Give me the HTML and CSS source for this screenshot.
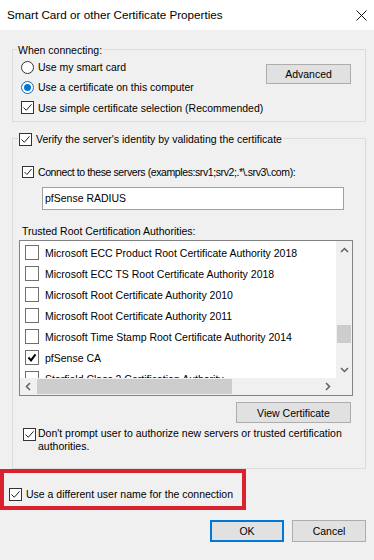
FILE: index.html
```html
<!DOCTYPE html>
<html lang="en">
<head>
    <meta charset="UTF-8">
    <meta name="viewport" content="width=device-width, initial-scale=1.0">
    <title>Smart Card or other Certificate Properties</title>
    <link rel="stylesheet" href="styles.css">
</head>
<body>
    <div class="titlebar">
        <span class="title">Smart Card or other Certificate Properties</span>
        <svg class="close" width="11" height="11" viewBox="0 0 11 11"><path d="M0.5 0.5l10 10M10.5 0.5l-10 10" stroke="#111" stroke-width="1" fill="none"/></svg>
    </div>

    <div class="group group-connect">
        <div class="legend">When connecting:</div>
        <div class="connect-body">
            <div class="options">
                <div class="row"><span class="radio"></span><span class="label">Use my smart card</span></div>
                <div class="row"><span class="radio checked"><span class="dot"></span></span><span class="label">Use a certificate on this computer</span></div>
                <div class="row row-last"><span class="cb"><svg width="11" height="11" viewBox="0 0 11 11"><path d="M1.5 5.5l2.8 2.8 5.2-6" fill="none" stroke="#222" stroke-width="1"/></svg></span><span class="label">Use simple certificate selection (Recommended)</span></div>
            </div>
            <button class="btn btn-advanced">Advanced</button>
        </div>
    </div>

    <div class="group group-verify">
        <div class="legend legend-check"><span class="cb"><svg width="11" height="11" viewBox="0 0 11 11"><path d="M1.5 5.5l2.8 2.8 5.2-6" fill="none" stroke="#222" stroke-width="1"/></svg></span><span class="label">Verify the server's identity by validating the certificate</span></div>

        <div class="row row-servers"><span class="cb cb-small"><svg width="10" height="10" viewBox="0 0 10 10"><path d="M1.5 5l2.5 2.5 4.5-5.5" fill="none" stroke="#222" stroke-width="1"/></svg></span><span class="label">Connect to these servers (examples:srv1;srv2;.*\.srv3\.com):</span></div>
        <div class="textbox">pfSense RADIUS</div>

        <div class="caption">Trusted Root Certification Authorities:</div>
        <div class="listbox">
            <div class="list-top">
                <div class="items">
                    <div class="item"><span class="item-cb"></span>Microsoft ECC Product Root Certificate Authority 2018</div>
                    <div class="item"><span class="item-cb"></span>Microsoft ECC TS Root Certificate Authority 2018</div>
                    <div class="item"><span class="item-cb"></span>Microsoft Root Certificate Authority 2010</div>
                    <div class="item"><span class="item-cb"></span>Microsoft Root Certificate Authority 2011</div>
                    <div class="item"><span class="item-cb"></span>Microsoft Time Stamp Root Certificate Authority 2014</div>
                    <div class="item"><span class="item-cb"><svg width="12" height="13" viewBox="0 0 12 13"><path d="M2.5 6.5l2.5 2.8 4.5-6" fill="none" stroke="#000" stroke-width="2"/></svg></span>pfSense CA</div>
                    <div class="item"><span class="item-cb"></span>Starfield Class 2 Certification Authority</div>
                </div>
                <div class="vscroll">
                    <span class="arrow"><svg width="9" height="6" viewBox="0 0 9 6"><path d="M1 5l3.5-3.5L8 5" fill="none" stroke="#606060" stroke-width="1.5"/></svg></span>
                    <div class="vtrack"><div class="vthumb"></div></div>
                    <span class="arrow"><svg width="9" height="6" viewBox="0 0 9 6"><path d="M1 1l3.5 3.5L8 1" fill="none" stroke="#606060" stroke-width="1.5"/></svg></span>
                </div>
            </div>
            <div class="hscroll">
                <span class="harrow"><svg width="6" height="9" viewBox="0 0 6 9"><path d="M5 1L1.5 4.5 5 8" fill="none" stroke="#606060" stroke-width="1.5"/></svg></span>
                <div class="htrack"><div class="hthumb"></div></div>
                <span class="harrow"><svg width="6" height="9" viewBox="0 0 6 9"><path d="M1 1l3.5 3.5L1 8" fill="none" stroke="#606060" stroke-width="1.5"/></svg></span>
                <span class="corner"></span>
            </div>
        </div>

        <div class="view-row"><button class="btn btn-view">View Certificate</button></div>

        <div class="row row-prompt"><span class="cb"><svg width="11" height="11" viewBox="0 0 11 11"><path d="M1.5 5.5l2.8 2.8 5.2-6" fill="none" stroke="#222" stroke-width="1"/></svg></span><span class="label">Don't prompt user to authorize new servers or trusted certification authorities.</span></div>
    </div>

    <div class="highlight">
        <div class="row"><span class="cb"><svg width="11" height="11" viewBox="0 0 11 11"><path d="M1.5 5.5l2.8 2.8 5.2-6" fill="none" stroke="#222" stroke-width="1"/></svg></span><span class="label">Use a different user name for the connection</span></div>
    </div>

    <div class="footer">
        <button class="btn btn-default">OK</button>
        <button class="btn">Cancel</button>
    </div>
</body>
</html>
```

FILE: styles.css
```css
body {
    margin: 0;
    width: 374px;
    height: 560px;
    overflow: hidden;
    background: #f0f0f0;
    font-family: "Liberation Sans", Arial, sans-serif;
    font-size: 10.5px;
    line-height: 14px;
    color: #000;
}
.titlebar {
    height: 30px;
    background: #fff;
    display: flex;
    align-items: center;
    justify-content: space-between;
    padding: 0 7px;
    font-size: 11.7px;
}
.close {
    margin-top: 1px;
}
.group {
    margin-left: 12px;
    width: 354px;
    box-sizing: border-box;
    border: 1px solid #dcdcdc;
}
.legend {
    display: flex;
    align-items: center;
    width: max-content;
    height: 14px;
    margin-top: -7px;
    padding: 0 1px;
    background: #f0f0f0;
}
.group-connect {
    margin-top: 19px;
    padding: 0 0 3px 8px;
}
.group-connect .legend {
    margin-left: -4px;
}
.connect-body {
    display: flex;
    justify-content: space-between;
    align-items: flex-start;
    padding-right: 14px;
}
.row {
    display: flex;
    align-items: center;
    height: 20px;
}
.row-last {
    height: 21px;
}
.label {
    margin-left: 4px;
    white-space: nowrap;
}
.radio {
    width: 13px;
    height: 13px;
    box-sizing: border-box;
    border: 1px solid #333;
    border-radius: 50%;
    background: #fff;
    display: flex;
    align-items: center;
    justify-content: center;
}
.radio.checked {
    border-color: #1c64a8;
}
.dot {
    width: 7px;
    height: 7px;
    border-radius: 50%;
    background: #0078d7;
}
.cb {
    width: 13px;
    height: 13px;
    box-sizing: border-box;
    border: 1px solid #333;
    background: #fff;
    display: flex;
    flex: none;
}
.cb-small {
    width: 12px;
    height: 12px;
}
.btn {
    font-family: inherit;
    font-size: 10.5px;
    color: #000;
    background: #e1e1e1;
    border: 1px solid #adadad;
    padding: 0;
    margin: 0;
}
.btn-advanced {
    margin-top: 7px;
    width: 85px;
    height: 20px;
}
.group-verify {
    margin-top: 16px;
    padding-bottom: 15px;
}
.legend-check {
    margin-left: 5px;
}
.row-servers {
    margin-top: 16px;
    margin-left: 9px;
}
.row-servers .label {
    letter-spacing: -0.4px;
}
.textbox {
    margin: 5px 0 0 29px;
    width: 302px;
    height: 23px;
    box-sizing: border-box;
    border: 1px solid #a0a0a0;
    background: #fff;
    padding: 0 2px;
    line-height: 21px;
}
.caption {
    margin: 14px 0 0 9px;
}
.listbox {
    margin: 2px 0 0 6px;
    width: 334px;
    height: 156px;
    box-sizing: border-box;
    border: 1px solid #828282;
    background: #fff;
    display: flex;
    flex-direction: column;
}
.list-top {
    display: flex;
    height: 137px;
}
.items {
    flex: 1;
    overflow: hidden;
    padding-top: 1px;
}
.item {
    display: flex;
    align-items: center;
    height: 21px;
    padding-left: 5px;
    white-space: nowrap;
}
.item-cb {
    width: 14px;
    height: 15px;
    box-sizing: border-box;
    border: 1px solid #6e6e6e;
    background: #fff;
    margin-right: 6px;
    flex: none;
    display: flex;
    align-items: center;
    justify-content: center;
}
.vscroll {
    width: 16px;
    background: #f0f0f0;
    display: flex;
    flex-direction: column;
}
.arrow {
    height: 17px;
    display: flex;
    align-items: center;
    justify-content: center;
}
.vtrack {
    flex: 1;
}
.vthumb {
    margin: 67px 1px 0;
    height: 18px;
    background: #cdcdcd;
}
.hscroll {
    display: flex;
    height: 17px;
    background: #f0f0f0;
}
.harrow {
    width: 16px;
    display: flex;
    align-items: center;
    justify-content: center;
}
.htrack {
    flex: 1;
    display: flex;
    align-items: center;
}
.hthumb {
    margin-left: 1px;
    width: 195px;
    height: 15px;
    background: #cdcdcd;
}
.corner {
    width: 16px;
}
.view-row {
    display: flex;
    justify-content: flex-end;
    padding-right: 14px;
    margin-top: 6px;
}
.btn-view {
    width: 115px;
    height: 21px;
}
.row-prompt {
    height: auto;
    align-items: flex-start;
    margin: 4px 0 0 10px;
    line-height: 13px;
}
.row-prompt .cb {
    margin-top: 1px;
}
.row-prompt .label {
    margin-left: 2px;
    white-space: normal;
    width: 322px;
}
.highlight {
    width: 246px;
    height: 41px;
    box-sizing: border-box;
    border: 4px solid #d9222d;
    padding: 11px 0 0 5px;
}
.footer {
    display: flex;
    justify-content: flex-end;
    gap: 8px;
    padding-right: 8px;
    margin-top: 10px;
}
.footer .btn {
    width: 74px;
    height: 22px;
}
.btn-default {
    border: 2px solid #0078d7;
}
```
